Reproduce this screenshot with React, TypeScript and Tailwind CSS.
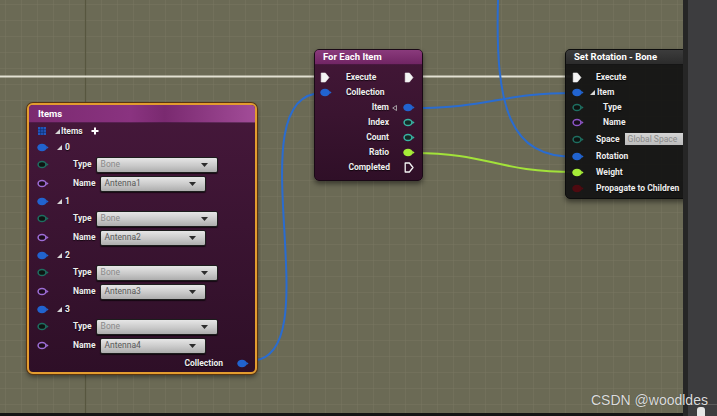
import React from "react";

type PinProps = { color: string; filled?: boolean; ring?: string };

function DataPin({ color, filled = true, ring }: PinProps) {
  return (
    <svg width="12" height="9" viewBox="0 0 12 9" className="shrink-0 block">
      {filled ? (
        <ellipse cx="5" cy="4.5" rx="4.7" ry="3.8" fill={color} />
      ) : (
        <ellipse cx="5" cy="4.5" rx="3.9" ry="3.1" fill={ring ?? "#0e1412"} stroke={color} strokeWidth="1.5" />
      )}
      <path d="M9.3 2.7 L11.6 4.5 L9.3 6.3 Z" fill={color} />
    </svg>
  );
}

function ExecPin({ filled = true }: { filled?: boolean }) {
  return (
    <svg width="10" height="11" viewBox="0 0 10 11" className="shrink-0 block">
      <path
        d="M1.2 1 H5.4 L9 5.5 L5.4 10 H1.2 Z"
        fill={filled ? "#f4f4f4" : "none"}
        stroke="#f4f4f4"
        strokeWidth={filled ? 0.6 : 1.3}
        strokeLinejoin="round"
      />
    </svg>
  );
}

function Tri() {
  return (
    <svg width="5" height="5" viewBox="0 0 5 5" className="shrink-0 block">
      <path d="M5 0 L5 5 L0 5 Z" fill="#d6d6d6" />
    </svg>
  );
}

function DownArrow() {
  return (
    <svg width="7" height="4" viewBox="0 0 7 4" className="shrink-0 block">
      <path d="M0 0 H7 L3.5 4 Z" fill="#2c2c2c" />
    </svg>
  );
}

function TypeDrop({ value }: { value: string }) {
  return (
    <div className="ml-[4px] flex h-[16px] w-[122px] items-center justify-between rounded-[2px] border border-[#1d1d1d] bg-[linear-gradient(180deg,#e6e6e6,#c9c9c9_55%,#adadad)] pl-[4px] pr-[9px] shadow-[0_1px_1px_rgba(0,0,0,0.6)]">
      <span className="text-[8.5px] font-normal text-[#8a8a8a] [text-shadow:none]">{value}</span>
      <DownArrow />
    </div>
  );
}

function NameDrop({ value }: { value: string }) {
  return (
    <div className="ml-[4px] flex h-[16px] w-[106px] items-center justify-between rounded-[2px] border border-[#1d1d1d] bg-[linear-gradient(180deg,#e6e6e6,#c9c9c9_55%,#adadad)] pl-[4px] pr-[9px] shadow-[0_1px_1px_rgba(0,0,0,0.6)]">
      <span className="text-[8.5px] font-normal text-[#5a5a5a] [text-shadow:none]">{value}</span>
      <DownArrow />
    </div>
  );
}

function ItemBlock({ idx, name }: { idx: string; name: string }) {
  return (
    <>
      <div className="flex h-[16px] items-center">
        <div className="ml-[8px]">
          <DataPin color="#2163cf" />
        </div>
        <div className="ml-[8px]">
          <Tri />
        </div>
        <span className="ml-[3px]">{idx}</span>
      </div>
      <div className="flex h-[19px] items-center">
        <div className="ml-[8px]">
          <DataPin color="#1e6e60" filled={false} />
        </div>
        <span className="ml-[24px]">Type</span>
        <TypeDrop value="Bone" />
      </div>
      <div className="flex h-[19px] items-center">
        <div className="ml-[8px]">
          <DataPin color="#9d6dd6" filled={false} ring="#1c0c1a" />
        </div>
        <span className="ml-[24px]">Name</span>
        <NameDrop value={name} />
      </div>
    </>
  );
}

function ItemsNode() {
  return (
    <div className="absolute left-[27px] top-[103px] w-[230px] overflow-hidden rounded-[6px] border-2 border-[#e39c2f] bg-[linear-gradient(180deg,#46183b_0%,#3b1432_45%,#2e0f27_100%)] shadow-[0_0_0_1px_#5a3510,0_3px_5px_rgba(0,0,0,0.45)]">
      <div className="flex h-[18px] items-center bg-[linear-gradient(90deg,#7b2a70_0%,#8a3380_45%,#7a2a70_60%,#a24c98_100%)] pl-[9px] text-[9.5px] font-bold text-white shadow-[inset_0_-1px_0_rgba(0,0,0,0.35)]">
        Items
      </div>
      <div className="flex flex-col text-[8.5px] font-bold text-[#eeeeee] [text-shadow:0_1px_1px_rgba(0,0,0,0.7)]">
        <div className="flex h-[16px] items-center">
          <svg width="8" height="8" viewBox="0 0 8 8" className="ml-[9px] block shrink-0">
            <rect x="0" y="0" width="8" height="8" fill="#2458c0" />
            <path d="M2.7 0 V8 M5.3 0 V8 M0 2.7 H8 M0 5.3 H8" stroke="#0f2c6a" strokeWidth="0.7" />
          </svg>
          <div className="ml-[9px]">
            <Tri />
          </div>
          <span className="ml-[1px]">Items</span>
          <svg width="8" height="8" viewBox="0 0 8 8" className="ml-[8px] block shrink-0">
            <path d="M4 0.5 V7.5 M0.5 4 H7.5" stroke="#ffffff" strokeWidth="2" />
          </svg>
        </div>
        <ItemBlock idx="0" name="Antenna1" />
        <ItemBlock idx="1" name="Antenna2" />
        <ItemBlock idx="2" name="Antenna3" />
        <ItemBlock idx="3" name="Antenna4" />
        <div className="flex h-[17px] items-center justify-end">
          <span>Collection</span>
          <div className="ml-[14px] mr-[6px]">
            <DataPin color="#2163cf" />
          </div>
        </div>
      </div>
    </div>
  );
}

function ForEachNode() {
  const row = "flex h-[15px] items-center";
  return (
    <div className="absolute left-[314px] top-[49px] w-[109px] overflow-hidden rounded-[5px] border border-[#1a0916] bg-[linear-gradient(180deg,#431737_0%,#3a1430_50%,#2f0f27_100%)] shadow-[0_3px_5px_rgba(0,0,0,0.45)]">
      <div className="flex h-[15px] items-center bg-[linear-gradient(180deg,#8a3a7c,#6f2462)] pl-[8px] text-[9.5px] font-bold text-white shadow-[inset_0_-1px_0_rgba(0,0,0,0.35)]">
        For Each Item
      </div>
      <div className="flex flex-col pb-[5px] pt-[5px] text-[8.5px] font-bold text-[#eeeeee] [text-shadow:0_1px_1px_rgba(0,0,0,0.7)]">
        <div className={row}>
          <div className="ml-[5px]">
            <ExecPin />
          </div>
          <span className="ml-[16px]">Execute</span>
          <div className="ml-auto mr-[8px]">
            <ExecPin />
          </div>
        </div>
        <div className={row}>
          <div className="ml-[5px]">
            <DataPin color="#2163cf" />
          </div>
          <span className="ml-[14px]">Collection</span>
        </div>
        <div className={row + " justify-end"}>
          <span>Item</span>
          <svg width="5" height="6" viewBox="0 0 5 6" className="ml-[3px] block shrink-0">
            <path d="M4.5 0.5 L0.7 3 L4.5 5.5 Z" fill="none" stroke="#bdbdbd" strokeWidth="0.8" />
          </svg>
          <div className="ml-[6px] mr-[7px]">
            <DataPin color="#2163cf" />
          </div>
        </div>
        <div className={row + " justify-end"}>
          <span>Index</span>
          <div className="ml-[14px] mr-[7px]">
            <DataPin color="#38b2a2" filled={false} ring="#142a26" />
          </div>
        </div>
        <div className={row + " justify-end"}>
          <span>Count</span>
          <div className="ml-[14px] mr-[7px]">
            <DataPin color="#38b2a2" filled={false} ring="#142a26" />
          </div>
        </div>
        <div className={row + " justify-end"}>
          <span>Ratio</span>
          <div className="ml-[14px] mr-[7px]">
            <DataPin color="#a6ec38" />
          </div>
        </div>
        <div className={row + " justify-end"}>
          <span>Completed</span>
          <div className="ml-[14px] mr-[8px]">
            <ExecPin filled={false} />
          </div>
        </div>
      </div>
    </div>
  );
}

function SetRotationNode() {
  return (
    <div className="absolute left-[565px] top-[49px] w-[150px] overflow-hidden rounded-[5px] border border-[#0c0c0c] bg-[rgba(20,20,20,0.95)] shadow-[0_3px_5px_rgba(0,0,0,0.45)]">
      <div className="flex h-[15px] items-center bg-[linear-gradient(180deg,#3c3c3c,#2a2a2a)] pl-[8px] text-[9.5px] font-bold text-white shadow-[inset_0_-1px_0_rgba(0,0,0,0.5)]">
        Set Rotation - Bone
      </div>
      <div className="flex flex-col pb-[2px] pt-[5px] text-[8.5px] font-bold text-[#eeeeee] [text-shadow:0_1px_1px_rgba(0,0,0,0.7)]">
        <div className="flex h-[15px] items-center">
          <div className="ml-[6px]">
            <ExecPin />
          </div>
          <span className="ml-[14px]">Execute</span>
        </div>
        <div className="flex h-[15px] items-center">
          <div className="ml-[6px]">
            <DataPin color="#2163cf" />
          </div>
          <div className="ml-[6px]">
            <Tri />
          </div>
          <span className="ml-[2px]">Item</span>
        </div>
        <div className="flex h-[15px] items-center">
          <div className="ml-[6px]">
            <DataPin color="#1e6e60" filled={false} />
          </div>
          <span className="ml-[19px]">Type</span>
        </div>
        <div className="flex h-[15px] items-center">
          <div className="ml-[6px]">
            <DataPin color="#8d55c6" filled={false} ring="#160f1a" />
          </div>
          <span className="ml-[19px]">Name</span>
        </div>
        <div className="flex h-[18px] items-center">
          <div className="ml-[6px]">
            <DataPin color="#1e6e60" filled={false} />
          </div>
          <span className="ml-[12px]">Space</span>
          <div className="ml-[4px] flex h-[14px] w-[70px] items-center border border-[#1a1a1a] bg-[linear-gradient(180deg,#d4d4d4,#bcbcbc)] pl-[3px]">
            <span className="text-[8.5px] font-normal text-[#8a8a8a] [text-shadow:none]">Global Space</span>
          </div>
        </div>
        <div className="flex h-[16px] items-center">
          <div className="ml-[6px]">
            <DataPin color="#2163cf" />
          </div>
          <span className="ml-[12px]">Rotation</span>
        </div>
        <div className="flex h-[16px] items-center">
          <div className="ml-[6px]">
            <DataPin color="#a6ec38" />
          </div>
          <span className="ml-[12px]">Weight</span>
        </div>
        <div className="flex h-[16px] items-center">
          <div className="ml-[6px]">
            <DataPin color="#4e0a10" />
          </div>
          <span className="ml-[12px] whitespace-nowrap">Propagate to Children</span>
          <div className="ml-[4px] h-[12px] w-[12px] shrink-0 border border-[#222] bg-[#d8d8d8]" />
        </div>
      </div>
    </div>
  );
}

function Canvas() {
  return (
    <div className="relative flex-1 overflow-hidden bg-[#6b6a55]">
      <svg className="absolute left-0 top-0" width="683" height="413" viewBox="0 0 683 413">
        <defs>
          <pattern id="minor" width="16" height="16" patternUnits="userSpaceOnUse" x="5" y="4">
            <path d="M0.5 0 V16 M0 0.5 H16" stroke="#7a7962" strokeWidth="1" fill="none" opacity="0.45" />
          </pattern>
        </defs>
        <rect x="0" y="0" width="683" height="413" fill="url(#minor)" />
        <line x1="85.5" y1="0" x2="85.5" y2="413" stroke="#57563f" strokeWidth="1.2" />
        <path d="M0 76.5 H322" stroke="#e2e0d2" strokeWidth="2" fill="none" />
        <path d="M412 76.5 H572" stroke="#e2e0d2" strokeWidth="2" fill="none" />
        <path d="M250 361 C 335 361, 232 93, 322 93" stroke="#2a6cd0" strokeWidth="2" fill="none" />
        <path d="M414 108 C 490 108, 500 93, 575 93" stroke="#2a6cd0" strokeWidth="2" fill="none" />
        <path d="M498 0 C 495 110, 510 157, 575 157" stroke="#2a6cd0" strokeWidth="2" fill="none" />
        <path d="M414 153 C 490 153, 495 172, 575 172" stroke="#a2e23a" strokeWidth="2" fill="none" />
      </svg>
      <ItemsNode />
      <ForEachNode />
      <SetRotationNode />
    </div>
  );
}

export default function App() {
  return (
    <div className="relative flex h-[416px] w-[717px] overflow-hidden font-[Roboto,sans-serif]">
      <div className="flex w-[683px] flex-col">
        <Canvas />
        <div className="h-[3px] bg-[#141414]" />
      </div>
      <div className="flex flex-1">
        <div className="w-[5px] bg-[#262626]" />
        <div className="flex flex-1 flex-col justify-end bg-[#3d3d3f]">
          <div className="h-[1px] bg-[#5a5a5a]" />
          <div className="flex h-[11px] items-end pl-[9px]">
            <div className="h-[9px] w-[8px] rounded-t-[3px] bg-[#e6e6e6]" />
          </div>
        </div>
      </div>
      <div className="absolute left-[591px] top-[392px] font-['Liberation_Sans',Arial,sans-serif] text-[14px] leading-[16px] text-[#dcdcdc] [text-shadow:0_0_1px_rgba(0,0,0,0.4)]">
        CSDN @woodldes
      </div>
    </div>
  );
}
